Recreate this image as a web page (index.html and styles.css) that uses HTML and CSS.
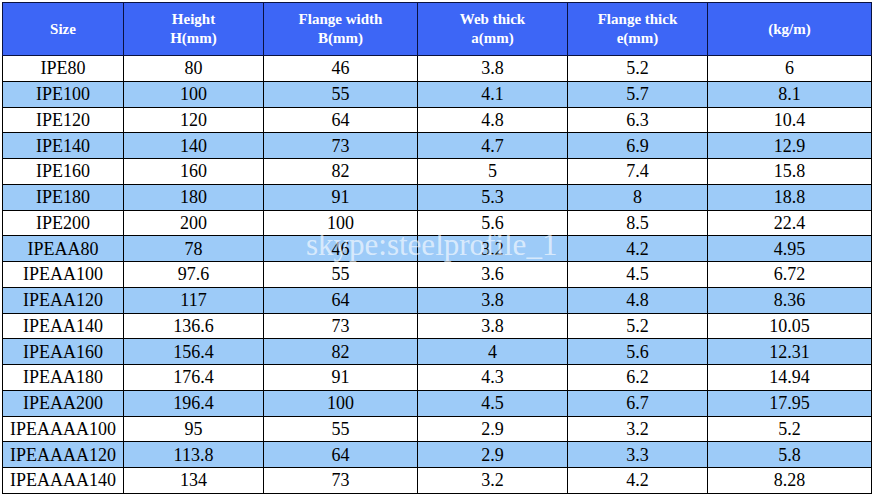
FILE: index.html
```html
<!DOCTYPE html>
<html>
<head>
<meta charset="utf-8">
<link rel="stylesheet" href="styles.css">
</head>
<body>
<div class="wrap">
<table class="spec">
  <colgroup>
    <col class="c1"><col class="c2"><col class="c3"><col class="c4"><col class="c5"><col class="c6">
  </colgroup>
  <thead>
    <tr>
      <th>Size</th>
      <th>Height<br>H(mm)</th>
      <th>Flange width<br>B(mm)</th>
      <th>Web thick<br>a(mm)</th>
      <th>Flange thick<br>e(mm)</th>
      <th>(kg/m)</th>
    </tr>
  </thead>
  <tbody>
    <tr><td>IPE80</td><td>80</td><td>46</td><td>3.8</td><td>5.2</td><td>6</td></tr>
    <tr class="alt"><td>IPE100</td><td>100</td><td>55</td><td>4.1</td><td>5.7</td><td>8.1</td></tr>
    <tr><td>IPE120</td><td>120</td><td>64</td><td>4.8</td><td>6.3</td><td>10.4</td></tr>
    <tr class="alt"><td>IPE140</td><td>140</td><td>73</td><td>4.7</td><td>6.9</td><td>12.9</td></tr>
    <tr><td>IPE160</td><td>160</td><td>82</td><td>5</td><td>7.4</td><td>15.8</td></tr>
    <tr class="alt"><td>IPE180</td><td>180</td><td>91</td><td>5.3</td><td>8</td><td>18.8</td></tr>
    <tr><td>IPE200</td><td>200</td><td>100</td><td>5.6</td><td>8.5</td><td>22.4</td></tr>
    <tr class="alt"><td>IPEAA80</td><td>78</td><td>46</td><td>3.2</td><td>4.2</td><td>4.95</td></tr>
    <tr><td>IPEAA100</td><td>97.6</td><td>55</td><td>3.6</td><td>4.5</td><td>6.72</td></tr>
    <tr class="alt"><td>IPEAA120</td><td>117</td><td>64</td><td>3.8</td><td>4.8</td><td>8.36</td></tr>
    <tr><td>IPEAA140</td><td>136.6</td><td>73</td><td>3.8</td><td>5.2</td><td>10.05</td></tr>
    <tr class="alt"><td>IPEAA160</td><td>156.4</td><td>82</td><td>4</td><td>5.6</td><td>12.31</td></tr>
    <tr><td>IPEAA180</td><td>176.4</td><td>91</td><td>4.3</td><td>6.2</td><td>14.94</td></tr>
    <tr class="alt"><td>IPEAA200</td><td>196.4</td><td>100</td><td>4.5</td><td>6.7</td><td>17.95</td></tr>
    <tr><td>IPEAAAA100</td><td>95</td><td>55</td><td>2.9</td><td>3.2</td><td>5.2</td></tr>
    <tr class="alt"><td>IPEAAAA120</td><td>113.8</td><td>64</td><td>2.9</td><td>3.3</td><td>5.8</td></tr>
    <tr><td>IPEAAAA140</td><td>134</td><td>73</td><td>3.2</td><td>4.2</td><td>8.28</td></tr>
  </tbody>
</table>
<div class="watermark">skype:steelprofile_1</div>
</div>
</body>
</html>
```
FILE: styles.css
```css
html, body {
  margin: 0;
  padding: 0;
  background: #ffffff;
}
.wrap {
  position: relative;
  padding: 2px 0 0 2px;
  width: 869px;
}
.spec {
  border-collapse: collapse;
  table-layout: fixed;
  width: 869px;
  font-family: "Liberation Serif", "Times New Roman", serif;
  color: #000;
}
.c1 { width: 121px; }
.c2 { width: 140px; }
.c3 { width: 154px; }
.c4 { width: 150px; }
.c5 { width: 140px; }
.c6 { width: 164px; }
.spec th {
  background: #3d66f6;
  color: #ffffff;
  font-weight: bold;
  font-size: 15px;
  line-height: 19px;
  height: 52px;
  padding: 0;
  border: 1px solid #0a1240;
  text-align: center;
  vertical-align: middle;
}
.spec td {
  height: 24.75px;
  padding: 0;
  border: 1px solid #000;
  text-align: center;
  vertical-align: middle;
  font-size: 18px;
  line-height: 20px;
}
.spec tr.alt td {
  background: #9dcbf8;
}
.watermark {
  position: absolute;
  left: 306px;
  top: 228px;
  font-family: "Liberation Serif", "Times New Roman", serif;
  font-size: 31px;
  line-height: 34px;
  color: rgba(255, 255, 255, 0.62);
  white-space: nowrap;
  pointer-events: none;
}
```
